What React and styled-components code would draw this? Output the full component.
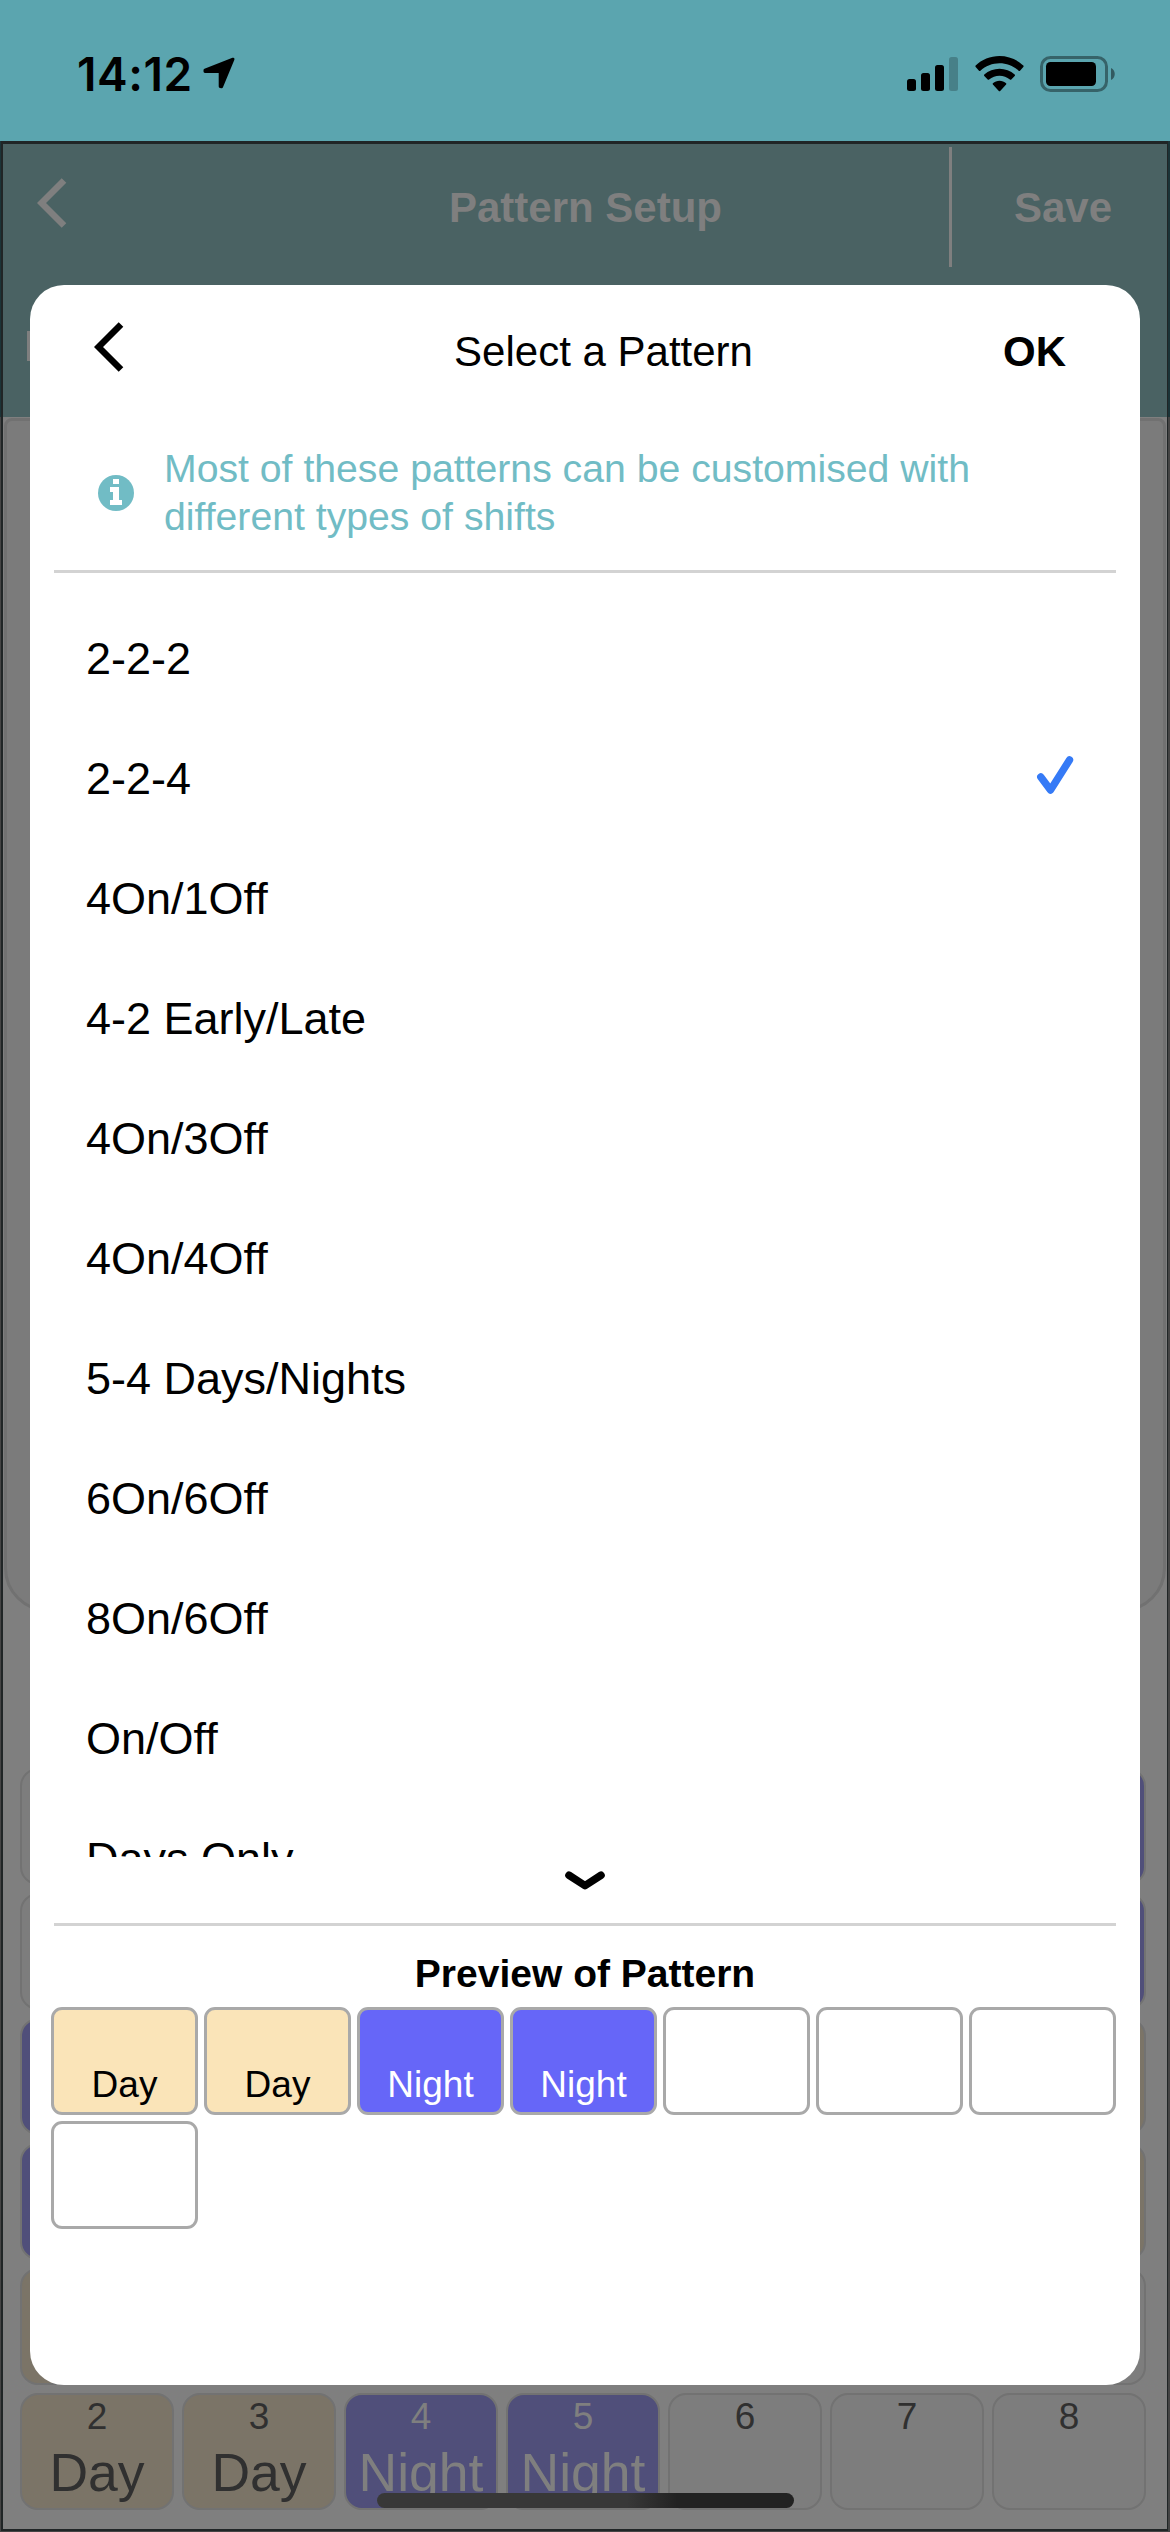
import React from 'react'
import styled, { createGlobalStyle } from 'styled-components'

const PATTERNS = [
    '2-2-2',
    '2-2-4',
    '4On/1Off',
    '4-2 Early/Late',
    '4On/3Off',
    '4On/4Off',
    '5-4 Days/Nights',
    '6On/6Off',
    '8On/6Off',
    'On/Off',
    'Days Only',
]

const CYCLE = ['day', 'day', 'night', 'night', 'off', 'off', 'off', 'off']
const LABELS = { day: 'Day', night: 'Night', off: '' }
const WEEKS = 6

// the last week starts on the first day of the cycle
const calendar = Array.from({ length: WEEKS * 7 }, (_, i) => {
    const offset = i - (WEEKS - 1) * 7
    return {
        shift: CYCLE[(offset + 40) % 8],
        date: offset >= 0 ? offset + 2 : null,
    }
})

function BackIcon() {
    return (
        <svg width="30" height="50" viewBox="0 0 30 50" fill="none">
            <path
                d="M27 2.5 L4.5 25 L27 47.5"
                stroke="currentColor"
                strokeWidth="6.5"
            />
        </svg>
    )
}

function LocationIcon() {
    return (
        <svg width="32" height="33" viewBox="0 0 32 33">
            <path
                d="M30 2.2 L2 13.2 L2 14.4 L17.2 14.6 L17.2 29.6 L18.6 29.8 Z"
                fill="#000"
                stroke="#000"
                strokeWidth="3"
                strokeLinejoin="round"
            />
        </svg>
    )
}

function SignalIcon() {
    return (
        <svg width="52" height="36" viewBox="0 0 52 36">
            <rect x="0" y="23" width="9" height="12" rx="2.5" />
            <rect x="14" y="17" width="9" height="18" rx="2.5" />
            <rect x="28" y="9" width="9" height="26" rx="2.5" />
            <rect x="42" y="1" width="9" height="34" rx="2.5" opacity=".22" />
        </svg>
    )
}

function WifiIcon() {
    return (
        <svg width="49" height="36" viewBox="0 0 49 36">
            <path d="M24.5 0 C33.5 0 42.5 3.6 48.3 9.6 Q49 10.3 48.3 11 L45 14.7 Q44.3 15.3 43.6 14.7 C38.5 10 31.5 7.3 24.5 7.3 C17.5 7.3 10.5 10 5.4 14.7 Q4.7 15.3 4 14.7 L.7 11 Q0 10.3 .7 9.6 C6.5 3.6 15.5 0 24.5 0Z" />
            <path d="M24.5 12.7 C30 12.7 35.7 14.8 39.7 18.5 Q40.4 19.2 39.7 19.9 L36.3 23.5 Q35.6 24.1 34.9 23.5 C32 21 28.3 19.7 24.5 19.7 C20.7 19.7 17 21 14.1 23.5 Q13.4 24.1 12.7 23.5 L9.3 19.9 Q8.6 19.2 9.3 18.5 C13.3 14.8 19 12.7 24.5 12.7Z" />
            <path d="M24.5 24.8 C27 24.8 29.3 25.7 31.1 27.2 Q31.7 27.9 31.1 28.6 L25.2 35 Q24.5 35.7 23.8 35 L17.9 28.6 Q17.3 27.9 17.9 27.2 C19.7 25.7 22 24.8 24.5 24.8Z" />
        </svg>
    )
}

function BatteryIcon() {
    return (
        <svg width="76" height="36" viewBox="0 0 76 36">
            <rect
                x="1.5"
                y="1.5"
                width="65"
                height="33"
                rx="9"
                fill="none"
                stroke="#000"
                strokeOpacity=".4"
                strokeWidth="3"
            />
            <rect x="6" y="6" width="50" height="24" rx="4.5" />
            <path d="M71 12 C76 14 76 22 71 24Z" opacity=".45" />
        </svg>
    )
}

function InfoIcon() {
    return (
        <svg width="36" height="36" viewBox="0 0 36 36">
            <circle cx="18" cy="18" r="18" fill="#71bcc5" />
            <path
                d="M15 4h6v5h-6z M12 12h9v13h3v5H12v-5h3v-8h-3z"
                fill="#fff"
            />
        </svg>
    )
}

function CheckIcon() {
    return (
        <svg width="38" height="40" viewBox="0 0 38 40" fill="none">
            <path
                d="M4.8 22 L14.5 35 L33.5 5"
                stroke="#357af6"
                strokeWidth="7.4"
                strokeLinecap="round"
                strokeLinejoin="round"
            />
        </svg>
    )
}

function MoreIcon() {
    return (
        <svg width="42" height="22" viewBox="0 0 42 22" fill="none">
            <path
                d="M5 5.2 L21 15.6 L37 5.2"
                stroke="#000"
                strokeWidth="7.6"
                strokeLinecap="round"
                strokeLinejoin="round"
            />
        </svg>
    )
}

function App() {
    return (
        <Screen>
            <GlobalStyle />
            <StatusBar>
                <Clock>14:12</Clock>
                <LocationIcon />
                <StatusIcons>
                    <SignalIcon />
                    <WifiIcon />
                    <BatteryIcon />
                </StatusIcons>
            </StatusBar>
            <Backdrop>
                <Page>
                    <PageHeader>
                        <HeaderBack>
                            <BackIcon />
                        </HeaderBack>
                        <HeaderTitle>Pattern Setup</HeaderTitle>
                        <HeaderSave>Save</HeaderSave>
                    </PageHeader>
                    <FieldStrip>
                        <Field />
                    </FieldStrip>
                    <Panel />
                    <Calendar>
                        {calendar.map((day, i) => (
                            <CalendarDay key={i} $shift={day.shift}>
                                {day.date && <DayNumber>{day.date}</DayNumber>}
                                {day.date && LABELS[day.shift] && (
                                    <DayShift>{LABELS[day.shift]}</DayShift>
                                )}
                            </CalendarDay>
                        ))}
                    </Calendar>
                </Page>
            </Backdrop>
            <Modal>
                <ModalHeader>
                    <BackIcon />
                    <ModalTitle>Select a Pattern</ModalTitle>
                    <OkButton>OK</OkButton>
                </ModalHeader>
                <Info>
                    <InfoIcon />
                    <InfoText>
                        Most of these patterns can be customised with
                        <br />
                        different types of shifts
                    </InfoText>
                </Info>
                <Divider />
                <PatternList>
                    {PATTERNS.map((name) => (
                        <PatternRow key={name}>
                            <PatternName>{name}</PatternName>
                            {name === '2-2-4' && <CheckIcon />}
                        </PatternRow>
                    ))}
                </PatternList>
                <More>
                    <MoreIcon />
                </More>
                <Divider />
                <PreviewTitle>Preview of Pattern</PreviewTitle>
                <Preview>
                    {CYCLE.map((shift, i) => (
                        <PreviewDay key={i} $shift={shift}>
                            {LABELS[shift]}
                        </PreviewDay>
                    ))}
                </Preview>
            </Modal>
            <HomeIndicator />
        </Screen>
    )
}

export default App

const GlobalStyle = createGlobalStyle`
    * {
        box-sizing: border-box;
    }
    body {
        margin: 0;
        font-family: 'Liberation Sans', Arial, sans-serif;
        color: #000;
    }
    svg {
        display: block;
        flex: none;
    }
`

const dimmed = { day: '#7b7467', night: '#504f7a', off: '#7d7d7d' }
const bright = { day: '#fae4b8', night: '#6666f8', off: '#fff' }

const Screen = styled.div`
    position: relative;
    display: flex;
    flex-direction: column;
    width: 1170px;
    height: 2532px;
    overflow: hidden;
    background: #5ba5af;
`

const StatusBar = styled.div`
    display: flex;
    align-items: center;
    height: 141px;
    padding: 6px 54px 0 77px;
`

const Clock = styled.span`
    width: 126px;
    font: 600 46px/56px Inter, sans-serif;
    letter-spacing: 0.6px;
    white-space: nowrap;
`

const StatusIcons = styled.div`
    display: flex;
    align-items: center;
    gap: 16px;
    margin-left: auto;
`

const Backdrop = styled.div`
    flex: 1;
    display: flex;
    padding: 0 2px 1px 1px;
    background: linear-gradient(#1b3337 276px, #444 276px);
`

const Page = styled.div`
    flex: 1;
    display: flex;
    flex-direction: column;
    border: solid #202526;
    border-width: 3px 1px 2px 2px;
    background: #7f7f7f;
`

const PageHeader = styled.header`
    flex: none;
    display: grid;
    grid-template-columns: 200px 1fr 218px;
    align-items: center;
    height: 126px;
    background: #4a6263;
    color: #7f7f7f;
    font-size: 42px;
    font-weight: bold;
`

const HeaderBack = styled.div`
    padding: 0 0 8px 34px;
`

const HeaderTitle = styled.div`
    text-align: center;
    padding: 2px 0 0 19px;
`

const HeaderSave = styled.div`
    align-self: start;
    margin-top: 3px;
    height: 120px;
    padding: 1px 0 0 62px;
    line-height: 120px;
    border-left: 3px solid #7f7f7f;
`

const FieldStrip = styled.div`
    flex: none;
    height: 147px;
    padding: 61px 24px 0;
    background: #4a6263;
`

const Field = styled.div`
    width: 400px;
    height: 30px;
    background: #7f7f7f;
`

const Panel = styled.div`
    flex: none;
    height: 1194px;
    margin: 1px 1px 0;
    border: 3px solid #717171;
    border-radius: 8px 8px 44px 44px;
    background: #7b7b7b;
`

const Calendar = styled.div`
    display: grid;
    grid-template-columns: repeat(7, 154px);
    grid-auto-rows: 117px;
    gap: 8px;
    margin: 156px 0 0 17px;
`

const CalendarDay = styled.div`
    display: flex;
    flex-direction: column;
    align-items: center;
    border: 2px solid #727272;
    border-radius: 18px;
    background: ${(props) => dimmed[props.$shift]};
    color: ${(props) => (props.$shift === 'night' ? '#7f7f7f' : '#303030')};
`

const DayNumber = styled.div`
    padding-top: 1px;
    font-size: 37px;
    line-height: 42px;
`

const DayShift = styled.div`
    padding-top: 7px;
    font-size: 53.5px;
    line-height: 56px;
    white-space: nowrap;
`

const Modal = styled.div`
    position: absolute;
    top: 285px;
    left: 30px;
    width: 1110px;
    height: 2100px;
    padding: 0 24px;
    border-radius: 34px;
    background: #fff;
`

const ModalHeader = styled.div`
    display: grid;
    grid-template-columns: 110px 1fr 108px;
    align-items: center;
    height: 123px;
    padding: 0 5px 0 40px;
`

const ModalTitle = styled.div`
    padding-top: 11px;
    font-size: 42px;
    text-align: center;
`

const OkButton = styled.div`
    padding-top: 11px;
    font-size: 42px;
    font-weight: bold;
`

const Info = styled.div`
    display: flex;
    align-items: center;
    gap: 30px;
    height: 162px;
    padding: 8px 0 0 44px;
`

const InfoText = styled.p`
    margin: 0;
    color: #71bcc5;
    font-size: 39.2px;
    line-height: 48px;
`

const Divider = styled.div`
    height: 3px;
    background: #d3d3d3;
`

const PatternList = styled.div`
    height: 1284px;
    padding-top: 25px;
    overflow: hidden;
`

const PatternRow = styled.div`
    display: flex;
    align-items: center;
    justify-content: space-between;
    height: 120px;
    padding: 0 42px 0 32px;

    svg {
        margin-bottom: 6px;
    }
`

const PatternName = styled.span`
    padding-top: 2px;
    font-size: 45px;
`

const More = styled.div`
    display: flex;
    justify-content: center;
    height: 66px;
    padding-top: 13px;
`

const PreviewTitle = styled.div`
    height: 81px;
    padding-top: 25px;
    font-size: 39px;
    font-weight: bold;
    line-height: 46px;
    text-align: center;
`

const Preview = styled.div`
    display: grid;
    grid-template-columns: repeat(7, 147px);
    grid-auto-rows: 108px;
    gap: 6px;
    margin-left: -3px;
`

const PreviewDay = styled.div`
    display: flex;
    align-items: flex-end;
    justify-content: center;
    padding-bottom: 6px;
    border: 3px solid #a9a9a9;
    border-radius: 11px;
    background: ${(props) => bright[props.$shift]};
    color: ${(props) => (props.$shift === 'night' ? '#fff' : '#000')};
    font-size: 37px;
    line-height: 42px;
`

const HomeIndicator = styled.div`
    position: absolute;
    left: 377px;
    top: 2493px;
    width: 417px;
    height: 15px;
    border-radius: 8px;
    background: linear-gradient(90deg, #383838 60%, #222 72%);
`
